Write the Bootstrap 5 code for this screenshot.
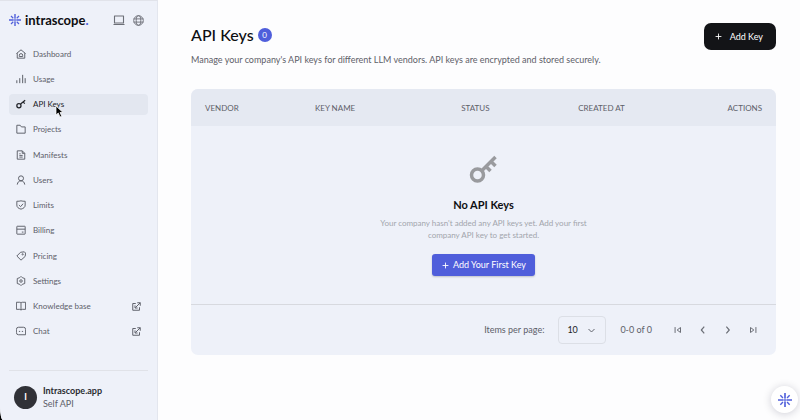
<!DOCTYPE html>
<html lang="en">
<head>
<meta charset="utf-8">
<meta name="viewport" content="width=device-width, initial-scale=1">
<title>API Keys - intrascope</title>
<link href="https://cdn.jsdelivr.net/npm/bootstrap@5.3.0/dist/css/bootstrap.min.css" rel="stylesheet">
<style>
  :root { --soft: #5d6069; --brand: #4f5edb; --panel: #eef1f9; }
  body { font-family: Lato, sans-serif; font-size: 9px; line-height: 12px; color: var(--soft); background: #000; fill: none; stroke-linejoin: round; }
  svg { stroke: currentColor; flex: none; display: block; }
  .shell { background: #fdfdfe; border-bottom-left-radius: 3px 14px; overflow: hidden; }
  .side { width: 158px; flex: none; background: var(--panel); border-right: 1px solid #e3e6ee; border-top: 1px solid #e1e3ea; padding: 9px 9px 10px; }
  .brand-name { font: 700 13px/20px Lato, sans-serif; color: #0c0d10; }
  .brand-name span, .spark { color: var(--brand); }
  .tool { border: 0; background: none; padding: 0; color: #6c6f77; }
  .menu { padding: 13px 0 28px; }
  .menu a { font-size: 8px; color: var(--soft); text-decoration: none; height: 21px; border-radius: 4px; padding: 0 7px; gap: 7px; }
  .menu a.active { background: #e3e7f0; color: #202227; }
  .user { border-top: 1px solid #e0e2e8; padding: 13px 5px 0; gap: 6px; }
  .avatar { width: 23px; height: 23px; border-radius: 50%; background: #303137; color: #fff; font-weight: 700; }
  .user-name { font-weight: 700; line-height: 14px; color: #2a2c31; }
  .page { padding: 23px 24px 24px 33px; }
  h1 { font: 500 16px/24px Lato, sans-serif; color: #0e0f12; }
  .count { width: 14px; height: 14px; border-radius: 50%; background: var(--brand); color: #fff; font-size: 8px; }
  .intro { line-height: 14px; margin-top: 6px; }
  .add { background: #131417; color: #fff; border: 0; border-radius: 7px; height: 27px; padding: 0 13px 0 11px; gap: 8px; }
  .panel { background: var(--panel); border-radius: 7px; overflow: hidden; margin-top: 22px; }
  .keys { width: 100%; table-layout: fixed; }
  .keys th { background: #e5e9f2; height: 37px; padding: 0 14px; font-weight: 400; font-size: 8px; color: #5d6069; }
  .keys td { height: 178px; padding: 2px 0 0; border-bottom: 1px solid #d7d9df; }
  .c1 { width: 18.8%; } .c2 { width: 25%; } .c3 { width: 20%; } .c4 { width: 20%; }
  .key-art { color: #999a9e; }
  h2 { font: 700 11px/16px Lato, sans-serif; color: #0e0f12; margin: 13px 0 4px; }
  .hint { font-size: 8px; max-width: 212px; color: #a2a5ac; line-height: 12px; margin-bottom: 13px; }
  .first { background: var(--brand); color: #fff; border: 0; border-radius: 3px; height: 22px; padding: 0 9px 0 10px; gap: 4px; box-shadow: 0 1px 2px #0003; }
  .pager { padding: 11px 14px 11px; gap: 14px; }
  .size { width: 48px; height: 28px; border: 1px solid #dcdfe6; border-radius: 4px; background: transparent; appearance: none; padding: 0 8px; color: #202227; }
  .size-box svg { right: 10px; top: 10px; pointer-events: none; }
  .pages { gap: 15px; margin: 0 4px 0 7px; }
  .help { right: 2px; bottom: 7px; width: 27px; height: 27px; border-radius: 50%; border: 0; background: #fff; color: var(--brand); box-shadow: 0 1px 8px #00002a30; padding: 0; }
  .pointer { left: 46px; top: 11px; pointer-events: none; }
  .pointer path { fill: #000; stroke: #fff; }
</style>
</head>
<body>
<svg class="d-none" aria-hidden="true">
  <symbol id="spark" viewBox="0 0 24 24"><path stroke-width="2.800" d="M12 0v9M12 15v9M0 12h9M15 12h9"/><path stroke-width="2.400" d="M4 4l4.500 4.500M20 4l-4.500 4.500M4 20l4.500-4.500M20 20l-4.500-4.500"/><path stroke-width="1.600" d="M12 9v6M9 12h6"/></symbol>
  <symbol id="plus" viewBox="0 0 24 24"><path stroke-width="3" d="M12 2v20M2 12h20"/></symbol>
  <symbol id="out" viewBox="0 0 24 24"><path stroke-width="2.600" d="M10 4H2v18h18v-8M14 2h8v8M22 2L9 15M8 9v7h7"/></symbol>
</svg>
<div class="shell d-flex min-vh-100">
  <aside class="side d-flex flex-column">
    <header class="d-flex align-items-center">
      <svg class="spark me-1" width="12" height="12"><use href="#spark"/></svg>
      <span class="brand-name">intrascope<span>.</span></span>
      <button class="tool ms-auto me-2" aria-label="Display"><svg width="12" height="12" viewBox="0 0 24 24" stroke-width="2.200"><path d="M3 4h18v14H3zM1 21h22"/></svg></button>
      <button class="tool me-1" aria-label="Language"><svg width="11" height="11" viewBox="0 0 24 24" stroke-width="2"><circle cx="12" cy="12" r="10.500"/><ellipse cx="12" cy="12" rx="5" ry="10.500"/><path d="M1.500 8.500h21M1.500 15.500h21"/></svg></button>
    </header>
    <nav class="menu d-flex flex-column justify-content-between flex-grow-1">
      <a class="d-flex align-items-center" href="#"><svg width="10" height="10" viewBox="0 0 24 24" stroke-width="2.300"><path d="M1 11L12 2l11 9M3 10v12h18V10M8 18v-3a4 4 0 0 1 8 0v3z"/></svg>Dashboard</a>
      <a class="d-flex align-items-center" href="#"><svg width="10" height="10" viewBox="0 0 24 24" stroke-width="2.400"><path d="M2 15v7M9 10v12M16 2v20M22 10v12"/></svg>Usage</a>
      <a class="active d-flex align-items-center position-relative" href="#"><svg width="10" height="10" viewBox="0 0 24 24" stroke-width="3"><circle cx="7" cy="16" r="5"/><path d="M11 12L22 3M17 7l4 4"/></svg>API Keys
        <svg class="pointer position-absolute" width="9" height="13" viewBox="0 0 18 26"><path stroke-width="1.500" d="M2 2v18l4.500-4 3.500 8 3.500-1.500-3.500-7.500h6z"/></svg></a>
      <a class="d-flex align-items-center" href="#"><svg width="10" height="10" viewBox="0 0 24 24" stroke-width="2.300"><path d="M2 3h8l3 4h9v15H2z"/></svg>Projects</a>
      <a class="d-flex align-items-center" href="#"><svg width="10" height="10" viewBox="0 0 24 24" stroke-width="2.300"><path d="M3 2h12l6 6v14H3zM15 2v6h6M8 9h3M8 13h8M8 17h8"/></svg>Manifests</a>
      <a class="d-flex align-items-center" href="#"><svg width="10" height="10" viewBox="0 0 24 24" stroke-width="2.400"><circle cx="12" cy="8" r="6"/><path d="M3 23c1-6 4-9 9-9s8 3 9 9"/></svg>Users</a>
      <a class="d-flex align-items-center" href="#"><svg width="10" height="10" viewBox="0 0 24 24" stroke-width="2.300"><path d="M12 2c3 1 6 1 10 1v9c0 6-4 8-10 10C6 20 2 18 2 12V3c4 0 7 0 10-1zM7 12l4 4 6-7"/></svg>Limits</a>
      <a class="d-flex align-items-center" href="#"><svg width="10" height="10" viewBox="0 0 24 24" stroke-width="2.300"><rect x="2" y="3" width="20" height="19" rx="1"/><path d="M2 10h20M14 17h4"/></svg>Billing</a>
      <a class="d-flex align-items-center" href="#"><svg width="10" height="10" viewBox="0 0 24 24" stroke-width="2.300"><path d="M11 3l9-1 3 3-1 8-10 9L2 12z"/><circle cx="16" cy="8" r="1.500"/></svg>Pricing</a>
      <a class="d-flex align-items-center" href="#"><svg width="10" height="10" viewBox="0 0 24 24" stroke-width="2.300"><path d="M12 1l3 3 6 2v12l-6 2-3 3-3-3-6-2V6l6-2z"/><circle cx="12" cy="12" r="3"/></svg>Settings</a>
      <a class="d-flex align-items-center" href="#"><svg width="10" height="10" viewBox="0 0 24 24" stroke-width="2.300"><path d="M1 3h8q3 0 3 2 0-2 3-2h8v17h-8q-3 0-3 2 0-2-3-2H1zM12 5v17"/></svg>Knowledge base<svg class="ms-auto" width="9" height="9"><use href="#out"/></svg></a>
      <a class="d-flex align-items-center" href="#"><svg width="10" height="10" viewBox="0 0 24 24" stroke-width="2.300"><path d="M6 3h12q5 0 5 5v13H6q-5 0-5-5V8q0-5 5-5zM7 13h3M14 13h3"/></svg>Chat<svg class="ms-auto" width="9" height="9"><use href="#out"/></svg></a>
    </nav>
    <footer class="user d-flex align-items-center">
      <span class="avatar d-flex align-items-center justify-content-center">I</span>
      <div><div class="user-name">Intrascope.app</div><div>Self API</div></div>
    </footer>
  </aside>
  <main class="page flex-grow-1">
    <div class="d-flex justify-content-between align-items-start">
      <div>
        <div class="d-flex align-items-center"><h1 class="m-0 me-1">API Keys</h1><span class="count d-flex align-items-center justify-content-center">0</span></div>
        <p class="intro mb-0">Manage your company's API keys for different LLM vendors. API keys are encrypted and stored securely.</p>
      </div>
      <button class="add d-flex align-items-center text-nowrap"><svg width="7" height="7"><use href="#plus"/></svg>Add Key</button>
    </div>
    <section class="panel">
      <table class="keys">
        <thead><tr><th class="c1">VENDOR</th><th class="c2">KEY NAME</th><th class="c3">STATUS</th><th class="c4">CREATED AT</th><th class="text-end">ACTIONS</th></tr></thead>
        <tbody><tr><td colspan="5">
          <div class="d-flex flex-column align-items-center text-center">
            <svg class="key-art" width="29" height="29" viewBox="0 0 29 29" stroke-width="3.500" stroke-linejoin="miter"><circle cx="8.500" cy="20" r="6"/><path d="M12.500 16L26.500 2M17 11.500l4.500 4.500M22 6.500l4.500 4.500"/></svg>
            <h2>No API Keys</h2>
            <p class="hint">Your company hasn't added any API keys yet. Add your first company API key to get started.</p>
            <button class="first d-flex align-items-center"><svg width="7" height="7"><use href="#plus"/></svg>Add Your First Key</button>
          </div>
        </td></tr></tbody>
      </table>
      <div class="pager d-flex align-items-center justify-content-end">
        <label for="size">Items per page:</label>
        <div class="size-box position-relative"><select id="size" class="size d-block"><option>10</option><option>25</option></select><svg class="position-absolute" width="9" height="9" viewBox="0 0 24 24" stroke-width="2.600"><path d="M4 8l8 8 8-8"/></svg></div>
        <span>0-0 of 0</span>
        <div class="pages d-flex">
          <button class="tool" aria-label="First page"><svg width="10" height="10" viewBox="0 0 24 24" stroke-width="2.400"><path d="M5 5v14M18 6v12l-8-6z"/></svg></button>
          <button class="tool" aria-label="Previous page"><svg width="10" height="10" viewBox="0 0 24 24" stroke-width="2.800"><path d="M15 4l-7 8 7 8"/></svg></button>
          <button class="tool" aria-label="Next page"><svg width="10" height="10" viewBox="0 0 24 24" stroke-width="2.800"><path d="M8 4l7 8-7 8"/></svg></button>
          <button class="tool" aria-label="Last page"><svg width="10" height="10" viewBox="0 0 24 24" stroke-width="2.400"><path d="M19 5v14M6 6v12l8-6z"/></svg></button>
        </div>
      </div>
    </section>
  </main>
</div>
<button class="help position-fixed d-flex align-items-center justify-content-center" aria-label="Open assistant"><svg width="14" height="14"><use href="#spark"/></svg></button>
<script src="https://cdn.jsdelivr.net/npm/bootstrap@5.3.0/dist/js/bootstrap.bundle.min.js"></script>
</body>
</html>
